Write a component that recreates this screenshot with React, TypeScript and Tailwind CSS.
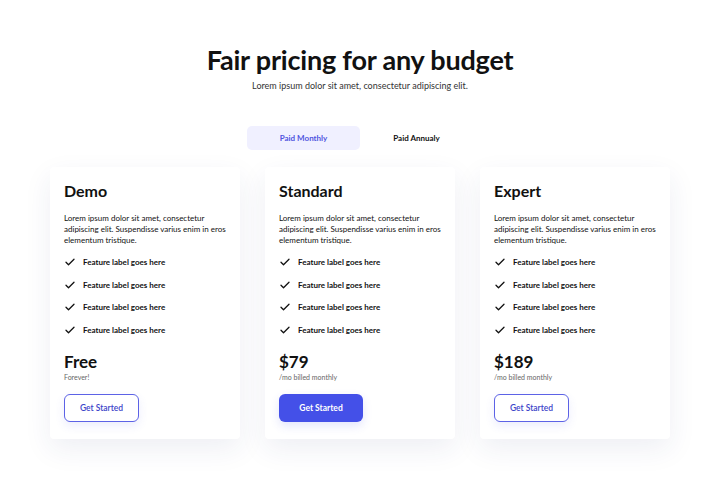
import React from 'react';

const PLANS = [
  { name: 'Demo', price: 'Free', note: 'Forever!', featured: false },
  { name: 'Standard', price: '$79', note: '/mo billed monthly', featured: true },
  { name: 'Expert', price: '$189', note: '/mo billed monthly', featured: false },
];

const FEATURES = ['Feature label goes here', 'Feature label goes here', 'Feature label goes here', 'Feature label goes here'];

const Check: React.FC = () => (
  <svg width="12" height="12" viewBox="0 0 24 24" fill="none" stroke="#111" strokeWidth="2.6" strokeLinecap="round" strokeLinejoin="round">
    <path d="M4 12.5l5 5L20 6.5" />
  </svg>
);

const App: React.FC = () => {
  return (
    <div className="w-[720px] h-[484px] bg-white flex flex-col items-center pt-[42px] text-[#111] font-['Lato',sans-serif]">
      <h1 className="text-[27px] leading-[36px] font-bold tracking-[-0.2px]">Fair pricing for any budget</h1>
      <p className="mt-[2px] text-[9px] leading-[12px] text-[#333]">Lorem ipsum dolor sit amet, consectetur adipiscing elit.</p>

      <div className="mt-[34px] flex">
        <button className="w-[113px] h-[24px] rounded-[5px] bg-[#f0f0ff] text-[8px] font-bold text-[#4f55e0]">Paid Monthly</button>
        <button className="w-[113px] h-[24px] rounded-[5px] text-[8px] font-bold text-[#111]">Paid Annualy</button>
      </div>

      <div className="mt-[17px] flex gap-[25px]">
        {PLANS.map((plan) => (
          <div
            key={plan.name}
            className="w-[190px] h-[272px] bg-white rounded-[4px] px-[14px] pt-[14px] flex flex-col shadow-[0_10px_28px_rgba(40,50,110,0.08)]"
          >
            <h2 className="text-[16px] leading-[20px] font-bold">{plan.name}</h2>
            <p className="mt-[12px] text-[8px] leading-[11px] text-[#111]">
              Lorem ipsum dolor sit amet, consectetur adipiscing elit. Suspendisse varius enim in eros elementum tristique.
            </p>
            <ul className="mt-[8px] flex flex-col gap-[6.5px]">
              {FEATURES.map((f, i) => (
                <li key={i} className="h-[16px] flex items-center gap-[7px] text-[8px] font-bold">
                  <Check />
                  {f}
                </li>
              ))}
            </ul>
            <div className="mt-[14px] text-[17px] leading-[20px] font-bold">{plan.price}</div>
            <div className="text-[7px] leading-[10px] text-[#666]">{plan.note}</div>
            <div className="mt-[11px]">
              {plan.featured ? (
                <button className="w-[84px] h-[28px] rounded-[6px] bg-[#4450e8] text-white text-[8.5px] font-bold shadow-[0_4px_10px_rgba(68,80,232,0.15)]">
                  Get Started
                </button>
              ) : (
                <button className="w-[75px] h-[28px] rounded-[6px] border-[1.5px] border-[#5c62e6] text-[#3d45c9] text-[8.5px] font-semibold shadow-[0_4px_10px_rgba(68,80,232,0.1)]">
                  Get Started
                </button>
              )}
            </div>
          </div>
        ))}
      </div>
    </div>
  );
};

export default App;
